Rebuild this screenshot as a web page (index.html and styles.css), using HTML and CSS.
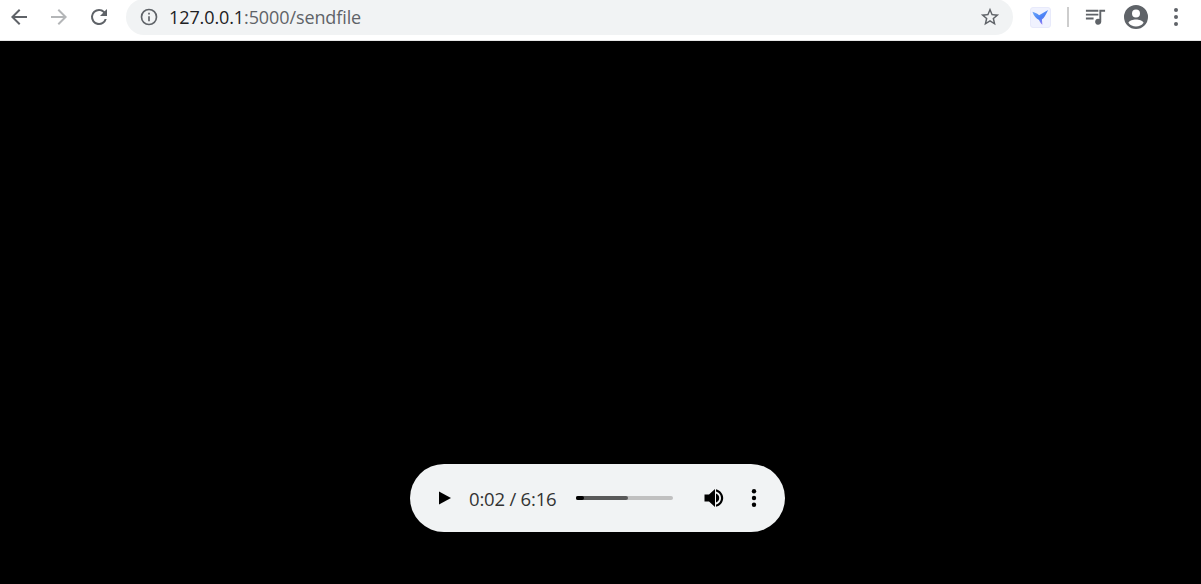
FILE: index.html
```html
<!DOCTYPE html>
<html lang="en">
<head>
<meta charset="utf-8">
<title>sendfile</title>
<link rel="stylesheet" href="styles.css">
</head>
<body>
<header class="toolbar">
  <svg class="nav-icon" viewBox="0 0 24 24"><path fill="#5f6368" d="M20 11H7.830l5.590-5.590L12 4l-8 8 8 8 1.410-1.410L7.830 13H20z"/></svg>
  <svg class="nav-icon" viewBox="0 0 24 24"><path fill="#b4b6b8" d="M12 4l-1.410 1.410L16.170 11H4v2h12.170l-5.580 5.590L12 20l8-8z"/></svg>
  <svg class="nav-icon" viewBox="0 0 24 24"><path fill="#5f6368" d="M17.650 6.350A7.960 7.960 0 0 0 12 4a8 8 0 1 0 7.730 10h-2.080A6 6 0 1 1 12 6c1.660 0 3.140.690 4.220 1.780L13 11h7V4z"/></svg>
  <div class="omnibox">
    <svg class="info-icon" viewBox="0 0 24 24"><path fill="#5f6368" d="M11 7h2v2h-2zm0 4h2v6h-2zm1-9a10 10 0 1 0 0 20 10 10 0 0 0 0-20zm0 18a8 8 0 1 1 0-16 8 8 0 0 1 0 16z"/></svg>
    <span class="url"><span class="host">127.0.0.1</span>:5000/sendfile</span>
    <svg class="star-icon" viewBox="0 0 24 24"><path fill="#5f6368" d="M22 9.240l-7.190-.620L12 2 9.190 8.630 2 9.240l5.460 4.730L5.820 21 12 17.270 18.180 21l-1.630-7.030L22 9.240zM12 15.400l-3.760 2.270 1-4.280-3.320-2.880 4.380-.380L12 6.100l1.710 4.040 4.380.380-3.320 2.880 1 4.280L12 15.400z"/></svg>
  </div>
  <div class="ext-badge">
    <svg viewBox="0 0 20 20">
      <defs><linearGradient id="bird" x1="0.100" y1="0.100" x2="0.700" y2="1"><stop offset="0" stop-color="#6aa6fa"/><stop offset="0.550" stop-color="#4a80f5"/><stop offset="1" stop-color="#a27af2"/></linearGradient></defs>
      <path fill="url(#bird)" d="M1.500 4c3 .8 5.300 2 7 3.500L18 2c-1 2.300-2 4.300-3.300 6.500-.8 1.500-1.800 2.800-3.200 3.700l.5 5.300c-1.700-1.500-2.800-3-3.500-5C5.500 11.500 3 8.500 1.500 4z"/>
    </svg>
  </div>
  <div class="divider"></div>
  <svg class="queue-icon" viewBox="0 0 24 24"><path fill="#5f6368" d="M2 5h13v2H2zm0 4h13v2H2zm0 4h8v2H2zm14-8h6v2h-4v10.500a3.200 3.200 0 1 1-2-2.950z"/></svg>
  <svg class="account-icon" viewBox="0 0 24 24"><path fill="#5f6368" d="M12 0a12 12 0 1 0 0 24 12 12 0 0 0 0-24zm0 4.500a4 4 0 1 1 0 8 4 4 0 0 1 0-8zm0 17a9.500 9.500 0 0 1-7.600-3.800c1-2.200 4.600-3.200 7.600-3.200s6.600 1 7.600 3.200A9.500 9.500 0 0 1 12 21.500z"/></svg>
  <svg class="menu-icon" viewBox="0 0 6 20"><g fill="#5f6368"><circle cx="3" cy="3" r="2"/><circle cx="3" cy="10" r="2"/><circle cx="3" cy="17" r="2"/></g></svg>
</header>
<main class="stage">
  <div class="player">
    <svg class="play" viewBox="0 0 14 16"><path fill="#000" d="M1 1.500v13l12-6.500z"/></svg>
    <span class="time">0:02 / 6:16</span>
    <div class="track"><div class="buffered"></div><div class="played"></div></div>
    <svg class="volume" viewBox="0 0 24 24"><path fill="#000" d="M1.500 8.500v7h4.500l6 5.500V3l-6 5.500z"/><path fill="#000" d="M13 7.500v9c2-.7 3.200-2.500 3.200-4.500S15 8.200 13 7.500z"/><path fill="#000" d="M13 3.200v2.200c2.900.8 5 3.500 5 6.600s-2.100 5.800-5 6.600v2.200c4.100-.9 7.200-4.600 7.200-8.800S17.100 4.100 13 3.200z"/></svg>
    <svg class="more" viewBox="0 0 6 20"><g fill="#000"><circle cx="3" cy="3.200" r="2.200"/><circle cx="3" cy="10" r="2.200"/><circle cx="3" cy="16.800" r="2.200"/></g></svg>
  </div>
</main>
</body>
</html>
```
FILE: styles.css
```css
* { box-sizing: border-box; }
html, body { margin: 0; height: 100%; }
body { display: flex; flex-direction: column; background: #000; font-family: "Open Sans", "Noto Sans", sans-serif; overflow: hidden; }

.toolbar { height: 41px; flex: none; background: #fff; display: flex; align-items: flex-start; padding: 0 0 0 7px; border-bottom: 1px solid #e6e6e6; }
.nav-icon { width: 24px; height: 24px; margin-top: 5px; margin-right: 16px; flex: none; }
.omnibox { width: 887px; height: 36px; margin-left: -1px; margin-top: -1px; background: #f1f3f4; border-radius: 18px; display: flex; align-items: center; padding: 0 12px 0 13px; }
.info-icon { width: 20px; height: 20px; flex: none; }
.url { margin-left: 10px; font-size: 18px; color: #5f6368; flex: 1; letter-spacing: -0.1px; }
.host { color: #202124; }
.star-icon { width: 22px; height: 22px; flex: none; }
.ext-badge { width: 21px; height: 21px; margin: 7px 0 0 17px; background: #f0f2fe; border: 1px solid #e8eafb; border-radius: 3px; flex: none; }
.ext-badge svg { display: block; width: 19px; height: 19px; }
.divider { width: 2px; height: 20px; margin: 7px 0 0 16px; background: #cdcdcd; flex: none; }
.queue-icon { width: 23px; height: 23px; margin: 5px 0 0 15px; flex: none; }
.account-icon { width: 24px; height: 24px; margin: 5px 0 0 17px; flex: none; }
.menu-icon { width: 6px; height: 20px; margin: 7px 0 0 25px; flex: none; }

.stage { flex: 1; padding: 423px 0 0 410px; }
.player { width: 375px; height: 68px; background: #f1f3f4; border-radius: 34px; display: flex; align-items: center; padding-left: 28px; }
.play { width: 14px; height: 16px; flex: none; }
.time { margin-left: 17px; font-size: 18.500px; color: #333; white-space: nowrap; width: 90px; letter-spacing: -0.2px; }
.track { position: relative; width: 97px; height: 4px; margin-left: 17px; border-radius: 2px; background: #c0c0c0; flex: none; }
.buffered { width: 52px; height: 4px; border-radius: 2px; background: #595959; }
.played { position: absolute; left: 0; top: 0; width: 8px; height: 4px; border-radius: 2px; background: #000; }
.volume { width: 24px; height: 24px; margin-left: 30px; flex: none; }
.more { width: 6px; height: 20px; margin-left: 24px; flex: none; }
```
